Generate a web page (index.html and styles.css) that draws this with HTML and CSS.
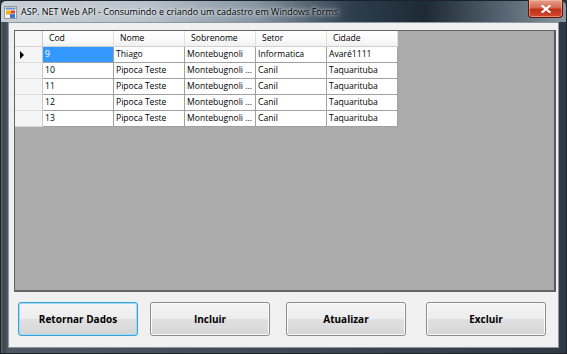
FILE: index.html
```html
<!DOCTYPE html>
<html>
<head>
<meta charset="utf-8">
<link rel="stylesheet" href="styles.css">
</head>
<body>
<div class="window">
  <div class="titlebar">
    <svg class="appicon" width="13" height="13" viewBox="0 0 13 13">
      <rect x="0.5" y="0.5" width="12" height="12" fill="#f3f3f3" stroke="#9a9a9a"/>
      <rect x="1.5" y="1.5" width="10" height="2" fill="#6f8fc8"/>
      <rect x="2" y="4.5" width="5" height="4" fill="#f0b020"/>
      <rect x="7" y="4.5" width="4" height="3" fill="#e04030"/>
      <rect x="6" y="8" width="5" height="4" fill="#3a78d8"/>
    </svg>
    <span class="title">ASP. NET Web API - Consumindo e criando um cadastro em Windows Forms</span>
    <div class="close">
      <svg width="10" height="8" viewBox="0 0 10 8"><path d="M1.5 1 L8.5 7 M8.5 1 L1.5 7" stroke="#ffffff" stroke-width="2.2" stroke-linecap="square"/></svg>
    </div>
  </div>
  <div class="client">
    <div class="gridview">
      <div class="table">
        <div class="row head">
          <div class="rh"></div>
          <div class="hc">Cod</div>
          <div class="hc">Nome</div>
          <div class="hc">Sobrenome</div>
          <div class="hc">Setor</div>
          <div class="hc">Cidade</div>
        </div>
        <div class="row">
          <div class="rh"><span class="arrow"></span></div>
          <div class="c sel">9</div>
          <div class="c">Thiago</div>
          <div class="c">Montebugnoli</div>
          <div class="c">Informatica</div>
          <div class="c">Avaré1111</div>
        </div>
        <div class="row">
          <div class="rh"></div>
          <div class="c">10</div>
          <div class="c">Pipoca Teste</div>
          <div class="c">Montebugnoli ...</div>
          <div class="c">Canil</div>
          <div class="c">Taquarituba</div>
        </div>
        <div class="row">
          <div class="rh"></div>
          <div class="c">11</div>
          <div class="c">Pipoca Teste</div>
          <div class="c">Montebugnoli ...</div>
          <div class="c">Canil</div>
          <div class="c">Taquarituba</div>
        </div>
        <div class="row">
          <div class="rh"></div>
          <div class="c">12</div>
          <div class="c">Pipoca Teste</div>
          <div class="c">Montebugnoli ...</div>
          <div class="c">Canil</div>
          <div class="c">Taquarituba</div>
        </div>
        <div class="row">
          <div class="rh"></div>
          <div class="c">13</div>
          <div class="c">Pipoca Teste</div>
          <div class="c">Montebugnoli ...</div>
          <div class="c">Canil</div>
          <div class="c">Taquarituba</div>
        </div>
      </div>
    </div>
    <div class="buttons">
      <button class="btn b1 focus">Retornar Dados</button>
      <button class="btn b2">Incluir</button>
      <button class="btn b3">Atualizar</button>
      <button class="btn b4">Excluir</button>
    </div>
  </div>
</div>
</body>
</html>
```
FILE: styles.css
```css
* { box-sizing: border-box; }
html, body { margin: 0; padding: 0; }
body { width: 567px; height: 354px; overflow: hidden; background: #2a3540; }

.window {
  width: 567px;
  height: 354px;
  display: flex;
  flex-direction: column;
  border: 1px solid #1c2228;
  border-radius: 6px 6px 0 0;
  background:
    linear-gradient(90deg, #5a6670 0px, #38424c 3px, #4d5863 6px, #2f3943 100%);
  position: relative;
}

.titlebar {
  height: 21px;
  flex: none;
  display: flex;
  align-items: center;
  padding-left: 3px;
  background: linear-gradient(90deg, #c7cfd6 0%, #b9c3cc 25%, #8796a3 45%, #2e3e4c 62%, #1d2a36 75%, #52616d 88%, #8a97a2 100%);
  border-radius: 5px 5px 0 0;
  position: relative;
}

.appicon { flex: none; margin-top: 1px; }

.title {
  margin-left: 4px;
  font-family: "Open Sans", "Noto Sans", sans-serif;
  font-size: 9px;
  color: #000;
  white-space: nowrap;
  text-shadow: 0 0 6px rgba(255,255,255,0.9), 0 0 3px rgba(255,255,255,0.9);
}

.close {
  position: absolute;
  top: -1px;
  right: 3px;
  width: 35px;
  height: 18px;
  border: 1px solid #5a1810;
  border-top: none;
  border-radius: 0 0 4px 4px;
  background: linear-gradient(180deg, #e8a08c 0%, #d66a52 45%, #c0301a 55%, #d24a30 100%);
  display: flex;
  align-items: center;
  justify-content: center;
  box-shadow: inset 0 0 0 1px rgba(255,200,180,0.5);
}

.client {
  flex: 1;
  margin: 0 7px 5px 7px;
  background: #f0f0f0;
  border: 1px solid #8d979f;
  display: flex;
  flex-direction: column;
  padding: 7px 2px 0 5px;
}

.gridview {
  height: 262px;
  background: #ababab;
  border: 1px solid #646464;
  border-right-width: 2px;
  border-bottom-width: 2px;
  border-right-color: #5a5a5a;
}

.table {
  display: flex;
  flex-direction: column;
  width: 383px;
  font-family: "Open Sans", "Noto Sans", sans-serif;
  font-size: 8.6px;
  color: #000;
}

.row {
  display: grid;
  grid-template-columns: 28px repeat(5, 71px);
  height: 16px;
}

.rh {
  background: #f5f5f5;
  border-right: 1px solid #c8c8c8;
  border-bottom: 1px solid #dcdcdc;
  display: flex;
  align-items: center;
  padding-left: 5px;
}

.head .rh { border-bottom: 1px solid #d0d0d0; background: #f7f7f7; }

.hc {
  background: linear-gradient(180deg, #ffffff 0%, #fafafa 60%, #f0f0f0 100%);
  border-right: 1px solid #e0e0e0;
  border-bottom: 1px solid #d0d0d0;
  padding-left: 6px;
  line-height: 15px;
  white-space: nowrap;
  overflow: hidden;
}

.c {
  background: #fff;
  border-right: 1px solid #a0a0a0;
  border-bottom: 1px solid #a0a0a0;
  padding-left: 2px;
  line-height: 15px;
  white-space: nowrap;
  overflow: hidden;
}

.c.sel { background: #3399ff; color: #fff; }

.arrow {
  width: 0;
  height: 0;
  border-top: 4px solid transparent;
  border-bottom: 4px solid transparent;
  border-left: 4px solid #000;
}

.buttons {
  display: flex;
  margin-top: 10px;
  padding-left: 4px;
}

.btn {
  width: 120px;
  height: 34px;
  font-family: "Open Sans", "Noto Sans", sans-serif;
  font-weight: bold;
  font-size: 10px;
  color: #000;
  border: 1px solid #8e8e8e;
  border-radius: 3px;
  background: linear-gradient(180deg, #f4f4f4 0%, #ececec 49%, #e0e0e0 51%, #d6d6d6 100%);
  box-shadow: inset 0 0 0 1px #fafafa;
  padding: 0;
  margin: 0;
}

.btn.focus {
  border-color: #3ca2d8;
  box-shadow: inset 0 0 0 1px #9fdaf5;
}

.b2 { margin-left: 12px; }
.b3 { margin-left: 16px; }
.b4 { margin-left: 20px; }
```
